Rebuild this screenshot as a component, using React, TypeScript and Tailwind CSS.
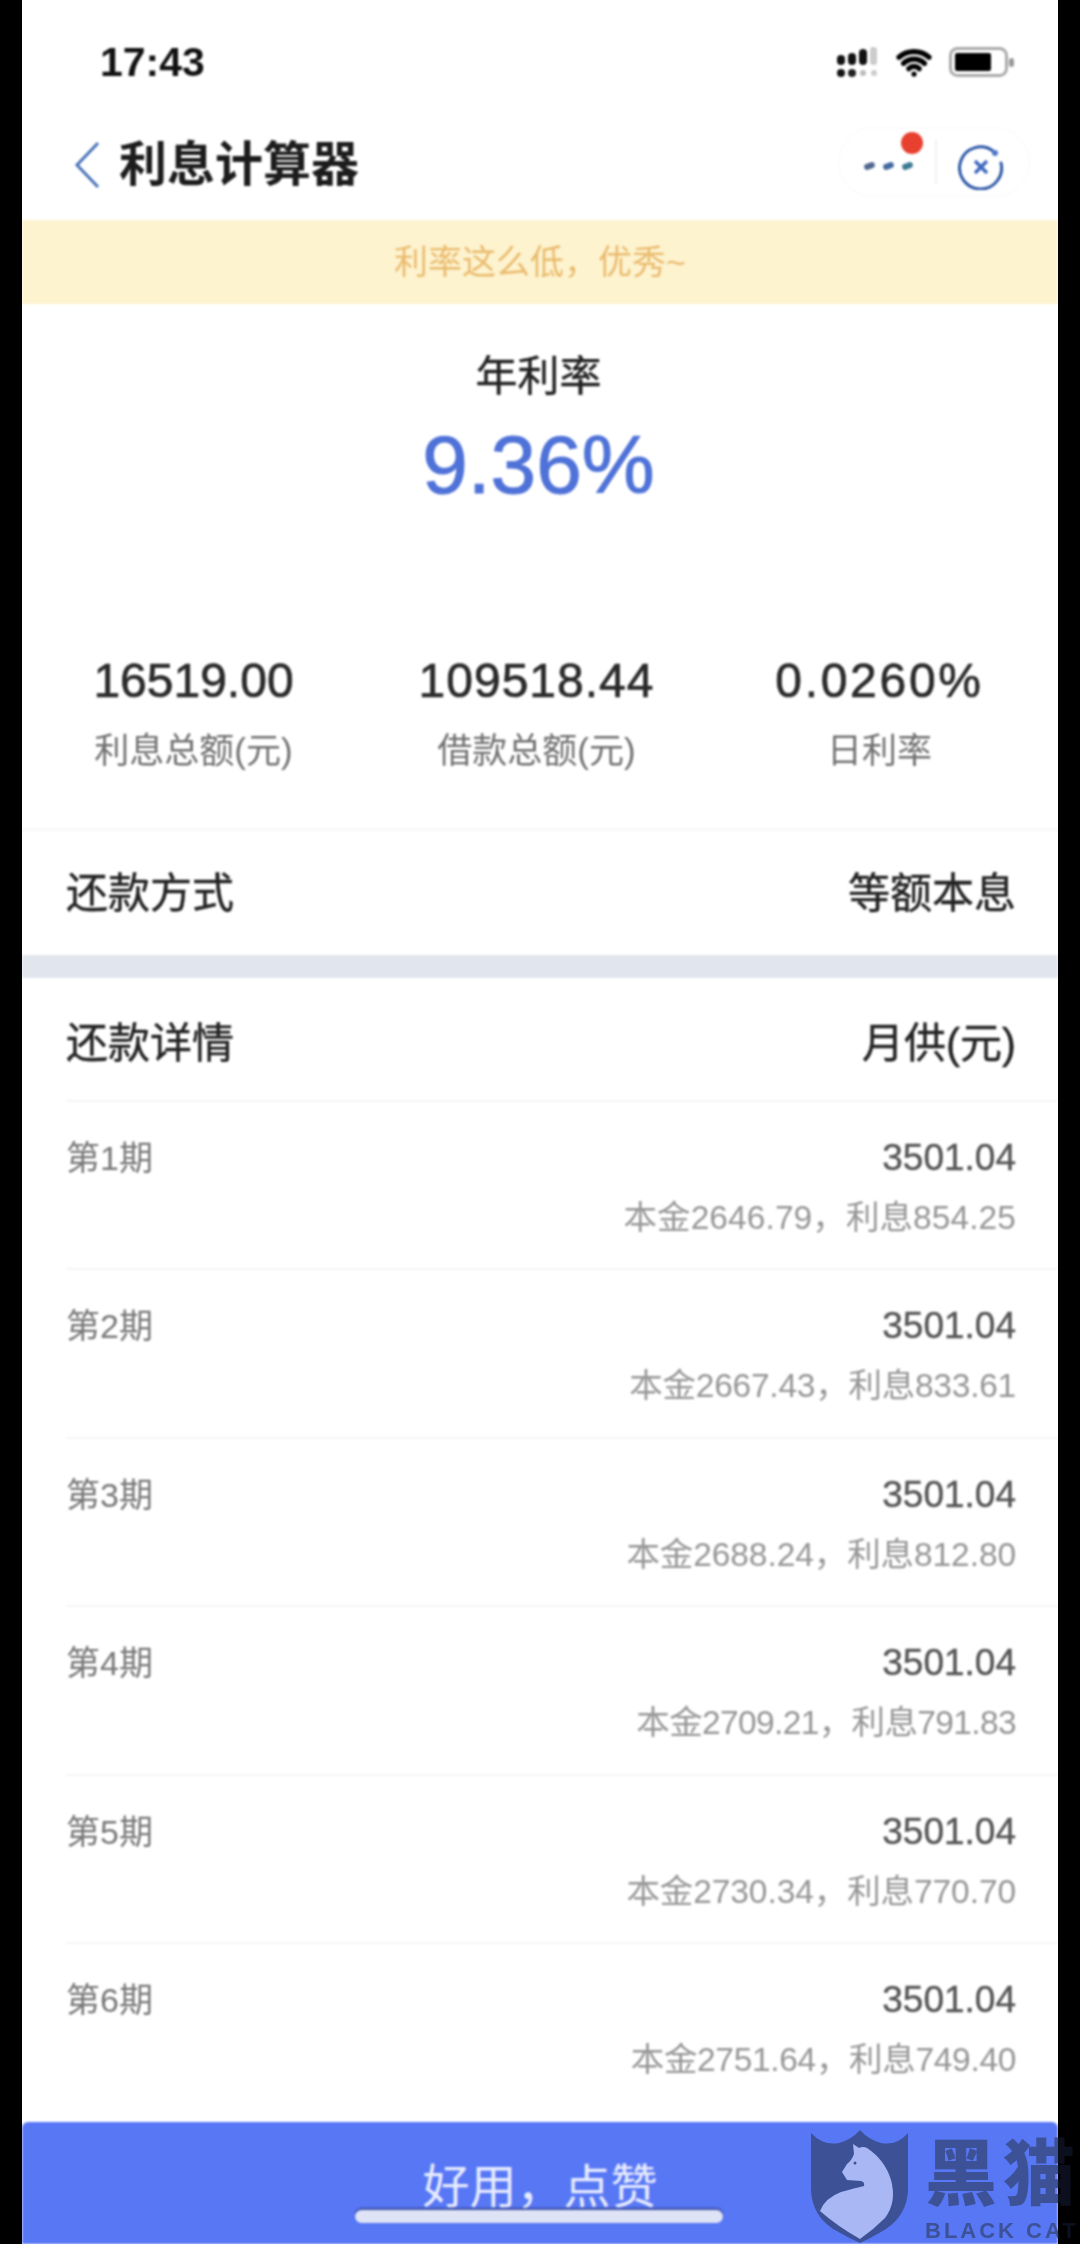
import { Wifi } from 'lucide-react';

const rows = [
  { label: '第1期', detail: '本金2646.79，利息854.25', spacing: 'tracking-[0.08px]' },
  { label: '第2期', detail: '本金2667.43，利息833.61', spacing: 'tracking-[-0.24px]' },
  { label: '第3期', detail: '本金2688.24，利息812.80', spacing: 'tracking-[-0.08px]' },
  { label: '第4期', detail: '本金2709.21，利息791.83', spacing: 'tracking-[-0.63px]' },
  { label: '第5期', detail: '本金2730.34，利息770.70', spacing: 'tracking-[-0.08px]' },
  { label: '第6期', detail: '本金2751.64，利息749.40', spacing: 'tracking-[-0.32px]' },
];

const stats = [
  { value: '16519.00', label: '利息总额(元)', spacing: 'tracking-normal' },
  { value: '109518.44', label: '借款总额(元)', spacing: 'tracking-[1px]' },
  { value: '0.0260%', label: '日利率', spacing: 'tracking-[2.7px]' },
];

function SignalIcon() {
  return (
    <svg width="42" height="30" viewBox="0 0 42 30">
      <rect x="0" y="8" width="8" height="10" rx="4" fill="#111" />
      <rect x="11" y="6" width="8" height="12" rx="4" fill="#111" />
      <rect x="22" y="2" width="8" height="16" rx="4" fill="#111" />
      <rect x="33" y="0" width="7" height="18" rx="3" fill="#ccc" />
      <circle cx="4" cy="26" r="4" fill="#111" />
      <circle cx="15" cy="26" r="4" fill="#222" />
      <circle cx="26" cy="26" r="3" fill="#bbb" />
      <circle cx="37" cy="26" r="3" fill="#ccc" />
    </svg>
  );
}

function BatteryIcon() {
  return (
    <svg width="67" height="30" viewBox="0 0 67 30">
      <rect x="1.5" y="1.5" width="56" height="27" rx="7" fill="#fff" stroke="#aaa" strokeWidth="3" />
      <rect x="6" y="6" width="36" height="18" rx="2" fill="#000" />
      <rect x="60" y="11" width="5" height="9" rx="2.5" fill="#999" />
    </svg>
  );
}

function CloseIcon() {
  return (
    <svg width="46" height="46" viewBox="0 0 46 46" fill="none">
      <path d="M35 7 A21 21 0 1 0 43 19" stroke="#2f5aa8" strokeWidth="3" strokeLinecap="round" />
      <circle cx="37" cy="9" r="3" fill="#4f78c8" />
      <path d="M17 17 L29 29 M29 17 L17 29" stroke="#3f68c0" strokeWidth="3.5" />
    </svg>
  );
}

function CatLogo() {
  return (
    <svg width="97" height="113" viewBox="0 0 97 113">
      <path d="M0 3 Q12 16 28 13 Q40 10 49 0 Q58 10 70 13 Q86 16 97 3 L97 60 Q96 85 75 99 Q60 108 49 113 Q38 108 22 99 Q1 85 0 60 Z" fill="#3d5296" />
      <path d="M42 14 L48 18 Q52 16 56 18 Q74 30 80 50 Q86 72 74 88 Q62 100 49 109 Q26 96 9 81 Q14 68 30 62 Q44 58 53 56 Q54 52 50 51 L36 50 L31 42 L36 34 Q41 30 43 24 Z" fill="#a9b8f4" />
      <circle cx="44" cy="33" r="1.5" fill="#3d5296" />
    </svg>
  );
}

export default function App() {
  return (
    <div className="relative w-[1080px] h-[2244px] overflow-hidden bg-black px-[22px] font-['Liberation_Sans','Noto_Sans_CJK_SC',sans-serif]">
      <div className="h-full overflow-hidden bg-white">
        <div className="flex flex-col h-full blur-[0.8px]">
          <div className="flex items-center justify-between h-[110px] pt-[14px] pl-[78px] pr-[42px]">
            <span className="text-[41px] leading-none font-bold text-[#111]">17:43</span>
            <div className="flex items-center gap-[15px]">
              <SignalIcon />
              <Wifi className="w-[40px] h-[36px] text-black" strokeWidth={3.5} />
              <BatteryIcon />
            </div>
          </div>

          <div className="flex items-center justify-between h-[110px] pl-[50px] pr-[28px]">
            <div className="flex items-center gap-[17px]">
              <svg width="30" height="50" viewBox="0 0 30 50" fill="none">
                <path d="M26 3 L5 25 L26 47" stroke="#4a72b8" strokeWidth="3" />
              </svg>
              <span className="text-[48px] leading-none font-bold text-[#1c1c1c]">利息计算器</span>
            </div>
            <div className="relative flex items-center w-[192px] h-[70px] -mt-[6px] rounded-full border border-[#f8f8f8]">
              <div className="flex items-center justify-center gap-[8px] w-[96px] pl-[3px] pt-[8px]">
                <span className="w-[11px] h-[6px] rounded-full bg-[#51688f] -rotate-[20deg]" />
                <span className="w-[11px] h-[6px] rounded-full bg-[#446aa0] -rotate-[20deg]" />
                <span className="w-[11px] h-[6px] rounded-full bg-[#3c7a94] -rotate-[20deg]" />
              </div>
              <div className="w-[2px] h-[44px] bg-[#eef1f6]" />
              <div className="flex flex-1 items-center justify-center pt-[10px] pr-[4px]">
                <CloseIcon />
              </div>
              <span className="absolute left-[62px] top-[4px] w-[22px] h-[22px] rounded-full bg-[#e8402f]" />
            </div>
          </div>

          <div className="flex items-center justify-center h-[84px] bg-[#fdf3cf] text-[34px] text-[#eabb6e]">
            利率这么低，优秀~
          </div>

          <div className="flex flex-col items-center pt-[51px] pr-[3px]">
            <span className="text-[42px] leading-[44px] text-[#222] [-webkit-text-stroke:0.4px_#222]">年利率</span>
            <span className="mt-[22px] text-[82px] leading-[88px] text-[#4f72d8] [-webkit-text-stroke:1px_#4f72d8]">9.36%</span>
          </div>

          <div className="grid grid-cols-3 mt-[145px] pr-[7px]">
            {stats.map((s) => (
              <div key={s.label} className="flex flex-col items-center">
                <span className={`text-[48px] leading-[54px] text-[#2a2a2a] [-webkit-text-stroke:0.7px_#2a2a2a] ${s.spacing}`}>{s.value}</span>
                <span className="mt-[23px] text-[35px] leading-[40px] text-[#707070]">{s.label}</span>
              </div>
            ))}
          </div>

          <div className="flex items-center justify-between h-[127px] mt-[57px] pl-[44px] pr-[42px] border-t-[3px] border-[#f7f7f7] text-[42px] text-[#222] [-webkit-text-stroke:0.4px_#222]">
            <span>还款方式</span>
            <span>等额本息</span>
          </div>

          <div className="h-[23px] bg-[#e1e6ee]" />

          <div className="flex items-center justify-between h-[122px] pt-[8px] pl-[44px] pr-[42px] text-[42px] text-[#222] [-webkit-text-stroke:0.4px_#222]">
            <span>还款详情</span>
            <span>月供(元)</span>
          </div>

          <div className="flex flex-col">
            {rows.map((row) => (
              <div key={row.label} className="flex justify-between h-[168.4px] ml-[44px] pr-[42px] pt-[34px] border-t-[2px] border-[#f6f6f6]">
                <span className="text-[34px] leading-[44px] text-[#777]">{row.label}</span>
                <div className="flex flex-col items-end">
                  <span className="text-[37px] leading-[44px] text-[#555] [-webkit-text-stroke:0.4px_#555]">3501.04</span>
                  <span className={`mt-[18px] text-[33.5px] leading-[40px] text-[#969696] ${row.spacing}`}>{row.detail}</span>
                </div>
              </div>
            ))}
          </div>

          <div className="relative flex flex-1 justify-center mt-[12px] pt-[38px] rounded-t-[6px] bg-[#5777f5] text-[47px] leading-[54px] text-[#e8ecff]">
            好用，点赞
            <span className="absolute left-[333px] bottom-[21px] w-[368px] h-[13px] rounded-full bg-[#dfe3f6] shadow-[0_-2px_2px_#3d4f9e]" />
          </div>
        </div>
      </div>

      <div className="absolute left-[811px] top-[2130px] flex gap-[17px]">
        <CatLogo />
        <div className="flex flex-col text-[#3d5296] whitespace-nowrap">
          <span className="mt-[6px] text-[72px] leading-[76px] font-black tracking-[6px]">黑猫</span>
          <span className="mt-[8px] text-[22px] leading-[22px] font-black tracking-[3px]">BLACK CAT</span>
        </div>
      </div>

      {/* right bar sits over the watermark, it only shows through faintly */}
      <div className="absolute right-0 top-[2120px] w-[22px] h-[124px] bg-black/80" />
    </div>
  );
}
